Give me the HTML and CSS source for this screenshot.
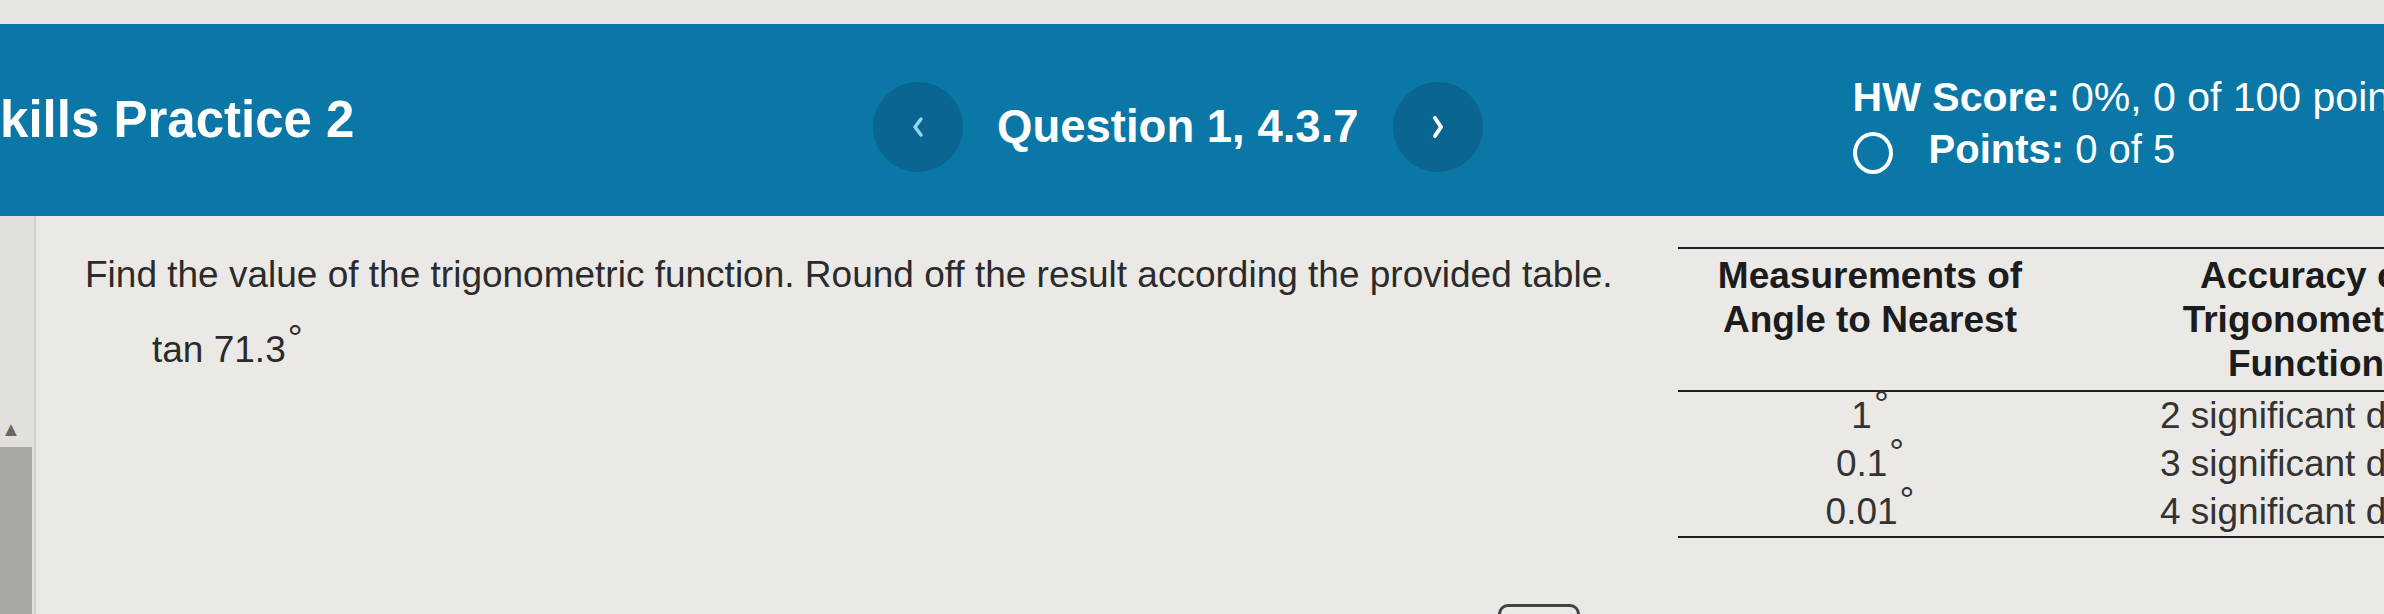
FILE: index.html
```html
<!DOCTYPE html>
<html lang="en">
<head>
    <meta charset="UTF-8">
    <meta name="viewport" content="width=device-width, initial-scale=1.0">
    <title>Skills Practice 2</title>

    <link rel="stylesheet" href="styles.css">
</head>
<body>
    <div class="top-strip"></div>

    <header class="header">
        <h1 class="title">Skills Practice 2</h1>

        <div class="nav">
            <button class="nav-btn" aria-label="Previous question">
                <svg width="16" height="26" viewBox="0 0 16 26">
                    <polyline points="11,5 5,13 11,21" fill="none" stroke="#8fd9ef" stroke-width="3.5" stroke-linecap="round" stroke-linejoin="round"/>
                </svg>
            </button>
            <span class="question-no">Question 1, 4.3.7</span>
            <button class="nav-btn" aria-label="Next question">
                <svg width="16" height="26" viewBox="0 0 16 26">
                    <polyline points="5,4 11,13 5,22" fill="none" stroke="#ffffff" stroke-width="4" stroke-linecap="round" stroke-linejoin="round"/>
                </svg>
            </button>
        </div>

        <div class="score">
            <p class="score-line"><b>HW Score:</b> 0%, 0 of 100 points</p>
            <p class="score-line"><span class="ring"></span><b>Points:</b> 0 of 5</p>
        </div>
    </header>

    <div class="main">
        <!-- Left scroll strip -->
        <div class="sidebar">
            <span class="arrow-up">&#9650;</span>
            <div class="thumb"></div>
        </div>

        <div class="content">
            <div class="question-row">
                <div class="question">
                    <p class="prompt">Find the value of the trigonometric function. Round off the result according the provided table.</p>
                    <p class="expr">tan 71.3<span class="deg">°</span></p>
                </div>

                <table class="accuracy">
                    <thead>
                        <tr>
                            <th class="col-angle">Measurements of<br>Angle to Nearest</th>
                            <th class="col-acc">Accuracy of<br>Trigonometric<br>Function</th>
                        </tr>
                    </thead>
                    <tbody>
                        <tr>
                            <td>1<span class="deg">°</span></td>
                            <td>2 significant digits</td>
                        </tr>
                        <tr>
                            <td>0.1<span class="deg">°</span></td>
                            <td>3 significant digits</td>
                        </tr>
                        <tr>
                            <td>0.01<span class="deg">°</span></td>
                            <td>4 significant digits</td>
                        </tr>
                    </tbody>
                </table>
            </div>

            <div class="actions">
                <button class="action-btn" aria-label="Help me solve this"></button>
            </div>
        </div>
    </div>
</body>
</html>
```

FILE: styles.css
```css
/* General Styles */
body {
    font-family: "Liberation Sans", Arial, sans-serif;
    background: #e7e5e1;
    margin: 0;
    padding: 0;
    width: 2384px;
    height: 614px;
    overflow: hidden;
}

.top-strip {
    height: 24px;
}

/* Header Bar */
.header {
    height: 192px;
    background: #0b77a7;
    color: white;
    display: flex;
    align-items: center;
    overflow: hidden;
    white-space: nowrap;
}

.title {
    flex-shrink: 0;
    width: 907px;
    margin: 0 0 0 -34px;
    font-size: 51px;
    font-weight: bold;
    line-height: 1.1;
}

.nav {
    display: flex;
    align-items: center;
    gap: 34px;
    margin-top: 14px;
    flex-shrink: 0;
}

.nav-btn {
    width: 90px;
    height: 90px;
    border: none;
    border-radius: 50%;
    background: #0a6690;
    display: flex;
    justify-content: center;
    align-items: center;
    padding: 0;
}

.question-no {
    font-size: 45.5px;
    font-weight: bold;
}

/* Score block */
.score {
    margin-left: 370px;
    margin-top: 6px;
    flex-shrink: 0;
}

.score-line {
    margin: 0;
    font-size: 41px;
    line-height: 52px;
    display: flex;
    align-items: center;
}

.score-line b {
    margin-right: 11px;
}

.score-line + .score-line {
    font-size: 40px;
}

.ring {
    width: 32px;
    height: 34px;
    border: 4px solid white;
    border-radius: 50%;
    margin: 8px 36px 0 0;
}

/* Body area */
.main {
    display: flex;
    height: 398px;
}

.sidebar {
    width: 34px;
    flex-shrink: 0;
    background: #e2e0dc;
    border-right: 2px solid #d2d0cc;
    display: flex;
    flex-direction: column;
}

.arrow-up {
    margin-top: 204px;
    font-size: 20px;
    line-height: 18px;
    color: #666;
    padding-left: 1px;
}

.thumb {
    margin-top: 9px;
    flex: 1;
    width: 32px;
    background: #aaa8a4;
}

.content {
    flex: 1;
    background: #ebe9e6;
    padding: 31px 0 0 49px;
    display: flex;
    flex-direction: column;
}

.question-row {
    display: flex;
}

.question {
    width: 1593px;
    flex-shrink: 0;
    color: #2b2b2b;
}

.prompt {
    margin: 6px 0 0;
    font-size: 37px;
    line-height: 44px;
}

.expr {
    margin: 31px 0 0 67px;
    font-size: 37px;
    line-height: 44px;
}

.deg {
    font-size: 1em;
    line-height: 0;
    vertical-align: 0.31em;
    margin-left: 2px;
}

/* Accuracy table */
.accuracy {
    flex-shrink: 0;
    width: 872px;
    border-collapse: collapse;
    border-top: 2px solid #1e1e1e;
    border-bottom: 2px solid #1e1e1e;
    font-size: 37px;
}

.accuracy th {
    font-weight: bold;
    color: #1c1c1c;
    line-height: 44px;
    padding: 5px 0 4px;
    vertical-align: top;
    border-bottom: 2px solid #1e1e1e;
}

.col-angle {
    width: 384px;
}

.col-acc {
    width: 488px;
}

.accuracy td {
    text-align: center;
    color: #333;
    line-height: 48px;
    padding: 0;
    white-space: nowrap;
}

/* Bottom action button, mostly below the fold */
.actions {
    margin-top: 66px;
    padding-left: 1413px;
}

.action-btn {
    width: 82px;
    height: 40px;
    border: 3px solid #444;
    border-radius: 10px;
    background: transparent;
}
```
